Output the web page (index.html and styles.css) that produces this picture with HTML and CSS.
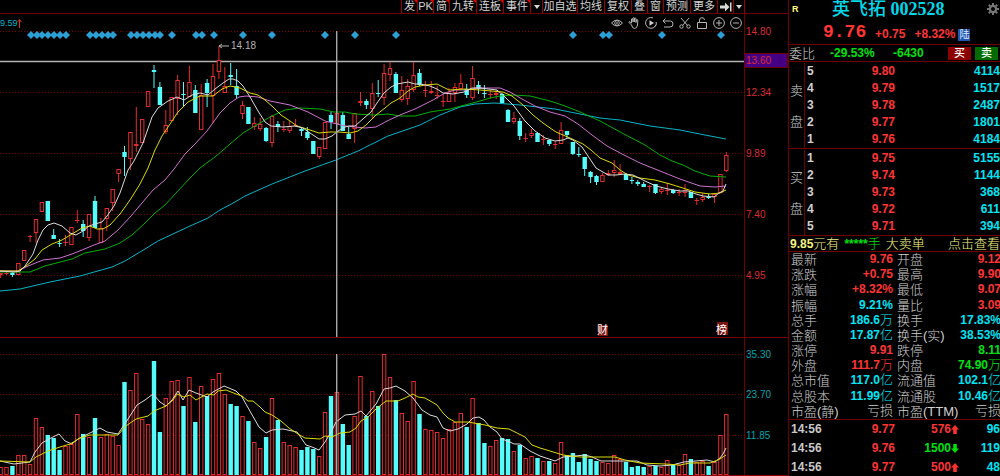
FILE: index.html
```html
<!DOCTYPE html>
<html lang="zh-CN">
<head>
<meta charset="utf-8">
<title>英飞拓 002528</title>
<link rel="stylesheet" href="styles.css">
</head>
<body>
<div class="terminal">
  <main class="main">
    <nav class="toolbar">
      <button class="tab tab-1 hot">发</button>
      <button class="tab tab-1 hot">PK</button>
      <button class="tab tab-1 hot">简</button>
      <button class="tab tab-2 hot">九转</button>
      <button class="tab tab-2 hot">连板</button>
      <button class="tab tab-2 hot">事件</button>
      <button class="tab tab-0" aria-label="展开"><span class="caret"></span></button>
      <button class="tab tab-3">加自选</button>
      <button class="tab tab-2">均线</button>
      <button class="tab tab-2">复权</button>
      <button class="tab tab-1">叠</button>
      <button class="tab tab-1">窗</button>
      <button class="tab tab-2">预测</button>
      <button class="tab tab-2">更多</button>
      <button class="tab tab-1" aria-label="隐藏"><svg width="12" height="10" viewBox="0 0 12 10"><path d="M0 3.500H5V0.500L9.500 5L5 9.500V6.500H0ZM10 0.500H11.500V9.500H10Z" fill="#d8d8d8"/></svg></button>
      <button class="tab tab-0" aria-label="菜单"><span class="caret"></span></button>
    </nav>
    <section class="chart">
      <div class="tools">
        <button class="tool" aria-label="显示"><svg viewBox="0 0 12 12"><path d="M.5 6Q6 0 11.500 6Q6 12 .5 6Z"/><circle cx="6" cy="6" r="2.300"/><circle cx="6" cy="6" r=".5"/></svg></button>
        <button class="tool" aria-label="拖动"><svg viewBox="0 0 12 12"><path d="M3.500 8L1 5.500Q.5 4.500 1.700 4.700L3.500 6V2Q4.300 1 5 2V5V1Q5.800 0 6.500 1V5V1.500Q7.300.7 8 1.500V5.500L8.300 3Q9.300 2 9.800 3L9.500 8Q9 11.500 6.500 11.500Q4.500 11.500 3.500 8Z"/></svg></button>
        <button class="tool" aria-label="播放"><svg viewBox="0 0 12 12"><path d="M8 .9A5.400 5.400 0 1 0 11.300 5M9.500 10L11.400 7.500"/><path d="M4.500 3.200L9 6L4.500 8.800Z" class="solid"/></svg></button>
        <button class="tool" aria-label="撤销"><svg viewBox="0 0 12 12"><path d="M3.500 1.500L1 4L3.500 6.500M1 4H8.500Q11 4.300 11 7Q11 10 8 10H2"/></svg></button>
        <button class="tool" aria-label="剪切"><svg viewBox="0 0 12 12"><path d="M2 1L8.500 8.500M10 1L3.500 8.500"/><circle cx="2.500" cy="9.500" r="1.700"/><circle cx="9.500" cy="9.500" r="1.700"/></svg></button>
        <button class="tool" aria-label="锁定"><svg viewBox="0 0 12 12"><path d="M1.500 5.500H10.500V11.500H1.500ZM3.500 5.500V3Q3.500.7 6 .7Q8.500.7 8.500 3"/></svg></button>
        <button class="tool" aria-label="放大"><svg viewBox="0 0 12 12"><circle cx="6" cy="6" r="5.400"/><path d="M3 6H9M6 3V9"/></svg></button>
        <button class="tool" aria-label="缩小"><svg viewBox="0 0 12 12"><circle cx="6" cy="6" r="5.400"/><path d="M3 6H9"/></svg></button>
      </div>
      <svg id="plot" class="plot" viewBox="0 14 788 462" preserveAspectRatio="xMinYMin meet"></svg>
    </section>
  </main>

  <aside class="side">
    <header class="head">
      <span class="flag">R</span>
      <h1 class="name">英飞拓 <span class="code">002528</span></h1>
      <button class="gear" aria-label="设置"><svg width="12" height="12" viewBox="0 0 12 12"><circle cx="6" cy="6" r="3.100" fill="none" stroke="#777" stroke-width="2.200"/><path d="M6 0V2M6 10V12M0 6H2M10 6H12M1.800 1.800L3.200 3.200M8.800 8.800L10.200 10.200M10.200 1.800L8.800 3.200M3.200 8.800L1.800 10.200" stroke="#777" stroke-width="2"/></svg></button>
    </header>
    <div class="quote">
      <span class="last">9.76</span><span>+0.75</span><span class="pct">+8.32%</span><span class="market">陆</span>
    </div>
    <div class="ratio">
      <span class="label">委比</span><span class="ratio-pct">-29.53%</span><span class="ratio-diff">-6430</span>
      <button class="trade buy">买</button><button class="trade sell">卖</button>
    </div>
    <table class="book">
      <tr><th class="book-side" rowspan="5"><span>卖</span><span>盘</span></th><td class="lv">5</td><td class="px">9.80</td><td class="qty">4114</td></tr>
      <tr><td class="lv">4</td><td class="px">9.79</td><td class="qty">1517</td></tr>
      <tr><td class="lv">3</td><td class="px">9.78</td><td class="qty">2487</td></tr>
      <tr><td class="lv">2</td><td class="px">9.77</td><td class="qty">1801</td></tr>
      <tr><td class="lv">1</td><td class="px">9.76</td><td class="qty">4184</td></tr>
    </table>
    <table class="book">
      <tr><th class="book-side" rowspan="5"><span>买</span><span>盘</span></th><td class="lv">1</td><td class="px">9.75</td><td class="qty">5155</td></tr>
      <tr><td class="lv">2</td><td class="px">9.74</td><td class="qty">1144</td></tr>
      <tr><td class="lv">3</td><td class="px">9.73</td><td class="qty">368</td></tr>
      <tr><td class="lv">4</td><td class="px">9.72</td><td class="qty">611</td></tr>
      <tr><td class="lv">5</td><td class="px">9.71</td><td class="qty">394</td></tr>
    </table>
    <div class="alert">
      <span><b>9.85</b>元有</span><span class="down"><b>*****</b>手</span><span>大卖单</span><a class="more" href="#detail">点击查看</a>
    </div>
    <table class="stats">
      <tr><th>最新</th><td class="up">9.76</td><th>开盘</th><td class="up">9.12</td></tr>
      <tr><th>涨跌</th><td class="up">+0.75</td><th>最高</th><td class="up">9.90</td></tr>
      <tr><th>涨幅</th><td class="up">+8.32%</td><th>最低</th><td class="up">9.07</td></tr>
      <tr><th>振幅</th><td>9.21%</td><th>量比</th><td class="up">3.09</td></tr>
      <tr><th>总手</th><td>186.6<i>万</i></td><th>换手</th><td>17.83%</td></tr>
      <tr><th>金额</th><td>17.87<i>亿</i></td><th>换手(实)</th><td>38.53%</td></tr>
      <tr><th>涨停</th><td class="up">9.91</td><th>跌停</th><td class="down">8.11</td></tr>
      <tr><th>外盘</th><td class="up">111.7<i>万</i></td><th>内盘</th><td class="down">74.90<i>万</i></td></tr>
      <tr><th>总市值</th><td>117.0<i>亿</i></td><th>流通值</th><td>102.1<i>亿</i></td></tr>
      <tr><th>总股本</th><td>11.99<i>亿</i></td><th>流通股</th><td>10.46<i>亿</i></td></tr>
      <tr><th>市盈(静)</th><td class="flat"><i>亏损</i></td><th>市盈(TTM)</th><td class="flat"><i>亏损</i></td></tr>
    </table>
    <table class="ticks">
      <tr><td class="time">14:56</td><td class="up">9.77</td><td class="up">576</td><td class="dir"><svg width="8" height="9" viewBox="0 0 8 9"><path d="M4 0L8 4.500H5.800V9H2.200V4.500H0Z" fill="#ff3030"/></svg></td><td>96</td></tr>
      <tr><td class="time">14:56</td><td class="up">9.76</td><td class="down">1500</td><td class="dir"><svg width="8" height="9" viewBox="0 0 8 9"><path d="M4 9L8 4.500H5.800V0H2.200V4.500H0Z" fill="#00e000"/></svg></td><td>119</td></tr>
      <tr><td class="time">14:56</td><td class="up">9.77</td><td class="up">500</td><td class="dir"><svg width="8" height="9" viewBox="0 0 8 9"><path d="M4 0L8 4.500H5.800V9H2.200V4.500H0Z" fill="#ff3030"/></svg></td><td>48</td></tr>
    </table>
  </aside>
</div>
<script src="chart.js"></script>
</body>
</html>
```

FILE: styles.css
```css
* { box-sizing: border-box; }
body {
  margin: 0;
  background: #000;
  color: #d0d0d0;
  font: 13px/15px "Liberation Sans", "Noto Sans CJK SC", sans-serif;
  overflow: hidden;
}
button {
  margin: 0;
  padding: 0;
  border: 0;
  background: none;
  color: inherit;
  font: inherit;
}
table { border-collapse: separate; border-spacing: 0; table-layout: fixed; width: 100%; }
th, td { padding: 0; font-weight: 400; text-align: right; white-space: nowrap; }
i { font-style: normal; font-weight: 300; }
b { font-weight: 700; }
.up { color: #ff3434; }
.down { color: #00e010; }

.terminal { display: grid; grid-template-columns: minmax(0, 1fr) 212px; height: 100vh; min-height: 476px; overflow: hidden; }
.main { display: flex; flex-direction: column; }

/* toolbar */
.toolbar {
  display: flex;
  justify-content: flex-end;
  height: 14px;
  padding-right: 43px;
  border-bottom: 1px solid #6a0000;
}
.tab {
  position: relative;
  height: 13px;
  border-left: 1px solid #900;
  color: #d4d4d4;
  font-size: 11px;
  line-height: 13px;
  text-align: center;
  white-space: nowrap;
}
.tab:last-child { border-right: 1px solid #900; }
.tab svg { display: block; margin: 0 auto; }
.tab-0 { width: 12px; }
.tab-1 { width: 16px; }
.tab-2 { width: 27px; }
.tab-3 { width: 35px; }
.hot::after {
  content: "";
  position: absolute;
  top: 0;
  right: 0;
  border-top: 3px solid #e00;
  border-left: 3px solid transparent;
}
.caret { display: inline-block; border: 3px solid transparent; border-top: 4px solid #d8d8d8; border-bottom: 0; vertical-align: middle; }

/* chart */
.chart { position: relative; }
.plot { display: block; width: 100%; }
.plot text { font: 10px "Liberation Sans", "Noto Sans CJK SC", sans-serif; }
.plot .small { font-size: 9px; }
.plot .mark { font-size: 11px; }
.tools { position: absolute; top: 3px; right: 46px; display: flex; gap: 5px; }
.tool { width: 12px; height: 12px; }
.tool svg { display: block; width: 12px; height: 12px; fill: none; stroke: #b4b4b4; stroke-width: 1; }
.tool .solid { fill: #d0d0d0; stroke: none; }

/* side panel */
.side { border-left: 1px solid #700000; overflow: hidden; }
.head { display: flex; align-items: center; height: 18px; padding: 0 1px 0 3px; }
.flag { width: 40px; color: #ffff80; font-size: 9px; font-weight: 700; }
.name { flex: 1; margin: 0; color: #00d8e8; font: 500 18px/18px "Liberation Serif", "Noto Sans CJK SC", serif; white-space: nowrap; }
.code { font-weight: 700; }
.gear svg { display: block; }
.quote {
  display: flex;
  align-items: flex-end;
  height: 27px;
  padding: 0 0 2px 34px;
  border-bottom: 1px solid #700000;
  color: #ff3434;
  font-size: 12px;
  font-weight: 700;
}
.last { width: 52px; font: 700 18px/20px "Liberation Mono", monospace; }
.pct { margin-left: 9px; }
.market { width: 12px; margin: 0 0 1px 3px; background: #2454a8; color: #dce8ff; font-size: 10px; font-weight: 400; line-height: 12px; text-align: center; }
.ratio {
  display: flex;
  align-items: center;
  height: 17px;
  padding-right: 2px;
  border-bottom: 1px solid #700000;
  color: #00e010;
  font-size: 12px;
  font-weight: 700;
}
.label { width: 41px; color: #d0d0d0; font-size: 13px; font-weight: 300; }
.ratio-pct { width: 63px; }
.ratio-diff { flex: 1; }
.trade { width: 23px; height: 13px; margin-left: 4px; color: #fff; font-size: 11px; font-weight: 500; line-height: 12px; }
.buy { background: #8c0000; }
.sell { background: #006c00; }

.book { padding-top: 1px; border-bottom: 1px solid #700000; font-size: 12px; line-height: 17px; }
.book td { font-weight: 700; }
.book-side { width: 16px; border-right: 1px solid #700000; font-size: 13px; font-weight: 300; line-height: 31px; text-align: center; }
.book-side span { display: block; }
.book .lv { width: 16px; padding-left: 2px; text-align: left; }
.book .px { width: 74px; color: #ff3434; }
.book .qty { color: #00e4f4; }

.alert {
  display: flex;
  gap: 5px;
  height: 16px;
  padding-left: 1px;
  border-bottom: 1px solid #700000;
  color: #f4f480;
  font-weight: 300;
  white-space: nowrap;
}
.alert b { font-size: 12px; }
.more { margin-left: auto; color: inherit; text-decoration: none; }

.stats { height: 167px; }
.stats th { width: 50px; padding-left: 2px; font-weight: 300; text-align: left; }
.stats th + td { width: 54px; }
.stats td + th { width: 54px; padding-left: 4px; }
.stats td { font-size: 12px; font-weight: 700; }
.stats td:not([class]) { color: #00e4f4; }
.stats i { font-size: 13px; line-height: 1; }

.ticks { border-top: 1px solid #700000; font-size: 12px; line-height: 19px; }
.ticks td { color: #00e4f4; font-weight: 700; }
.ticks td.time { width: 46px; padding: 0 0 0 2px; color: #c8c8c8; text-align: left; }
.ticks td.up { width: 60px; color: #ff3434; }
.ticks td.down { color: #00e010; }
.ticks td:nth-child(3) { width: 56px; }
.ticks td.dir { width: 9px; }
.ticks svg { display: block; }
```

FILE: chart.js
```js
const plot = document.getElementById("plot");
const STEP = 5.9, FIRST = 0.6;
const RED = "#e42c2c", CYAN = "#54fcfc";

function el(name, attrs, text) {
  const node = document.createElementNS("http://www.w3.org/2000/svg", name);
  for (const key in attrs) node.setAttribute(key, attrs[key]);
  if (text) node.textContent = text;
  plot.appendChild(node);
}
function line(x1, y1, x2, y2, stroke, extra) {
  el("line", Object.assign({ x1, y1, x2, y2, stroke }, extra));
}
function bar(x, top, bottom, rising) {
  if (rising && bottom - top > 2) {
    el("rect", { x: x - 1.7, y: top + 0.5, width: 3.4, height: bottom - top - 1, fill: "#000", stroke: RED });
  } else {
    el("rect", { x: x - 2.2, y: top, width: 4.4, height: Math.max(1, bottom - top), fill: rising ? RED : CYAN });
  }
}

// direction, body top, body bottom, wick top, wick bottom
const candles = `r273,275,273,278 r273,274,272,275 c273,275,272,277 r263,275,263,275 r250,261,250,261 r236,237,235,242 r219,233,219,243 r202,212,202,212
c201,221,201,221 c235,239,229,239 c243,244,239,247 r242,243,235,246 r227,245,227,245 r220,221,210,223 c224,231,220,237 r214,238,214,241
c201,228,196,228 r228,243,218,243 r208,219,208,231 r189,203,189,211 r169,174,169,182 c152,157,146,176 r132,159,132,170 r144,146,107,152
r119,143,119,143 r91,107,91,107 c70,72,65,88 c87,105,82,105 r125,132,110,134 r97,121,97,121 r80,99,75,115 c94,95,82,107
r82,97,66,97 c90,113,85,113 r95,130,84,130 c83,93,79,107 r76,96,64,123 r60,72,46,79 r86,93,67,93 c75,77,63,85
c86,95,69,99 r105,114,101,119 c107,124,107,124 r123,127,117,130 r124,129,118,131 c128,141,127,142 r116,143,115,147 c124,127,121,132
r129,130,121,132 r126,131,121,133 r125,126,119,127 c129,131,127,136 c132,138,127,140 c141,154,141,154 r147,157,147,159 r122,149,122,149
c115,122,112,129 r113,124,100,124 c115,131,112,131 c134,139,127,139 r113,129,113,143 r101,103,92,106 c101,105,99,109 r93,109,83,118
c93,94,80,97 r73,98,64,105 r68,75,62,81 c74,93,72,93 r90,100,76,102 r86,99,79,105 r75,90,62,92 c73,85,69,86
r90,91,81,97 r91,93,81,94 r95,96,86,99 r101,102,94,107 r93,102,88,102 r87,93,83,102 r83,89,74,89 c89,95,84,98
r78,98,66,100 c85,89,81,94 c93,94,85,98 r94,95,90,99 r93,95,90,99 c94,103,93,103 c110,122,109,122 r118,122,112,124
c121,136,118,140 r138,139,133,142 r133,136,129,138 c133,142,132,142 r139,140,135,145 c140,144,140,146 r144,145,141,149 r130,144,122,144
c131,135,131,138 c142,154,142,155 c154,155,147,157 c157,169,157,176 c172,177,171,183 c176,182,175,185 r175,182,173,182 r173,175,170,176
r170,173,160,177 r172,174,164,174 c174,180,173,180 c180,181,177,184 c182,184,180,186 c184,187,182,187 r186,187,185,192 c184,193,184,194
r189,192,187,194 r190,191,183,195 c190,193,189,194 r192,193,189,196 r190,193,184,197 c192,198,192,198 r200,201,198,205 r197,200,193,202
c197,198,194,199 r194,197,194,203 r174,193,174,193 r155,171,152,172`.split(/\s+/);

// top of each volume bar
const volumes = [467,467,466,455,455,464,418,427,435,438,450,446,444,414,434,437,418,437,434,436,445,382,390,373,419,424,361,432,398,381,380,406,
377,422,386,396,379,373,394,404,406,416,421,442,448,437,398,420,442,445,447,450,447,449,456,412,396,392,424,445,416,376,416,391,
406,354,377,400,413,421,381,414,429,430,432,438,429,422,413,427,398,423,443,446,440,438,439,451,445,458,456,458,461,461,463,442,
455,453,462,454,459,461,462,463,455,459,462,467,466,467,466,466,467,460,465,465,454,459,462,461,466,462,435,414];
const volumeCyan = new Set([2,8,9,10,14,16,21,26,27,31,33,35,39,40,42,45,47,51,52,53,56,58,59,62,64,67,71,79,81,82,85,86,88,91,93,96,97,98,99,100,101,106,107,108,109,111,114,117,120]);

const averages = [
  ["#00b4c8", "0,291 20,289 50,282 80,276 112,267 125,261 145,249 158,241 175,233 190,226 208,218 220,210 235,202 245,196 272,184 305,171 336,160 358,151 388,136 420,125 440,115 460,107 475,104 495,103 520,105 555,109 575,113 600,118 620,120 650,126 680,130 705,135 726,139"],
  ["#00b000", "0,272 30,272 45,266 60,262 72,259 85,253 105,249 120,243 132,235 145,223 155,213 165,205 177,192 190,178 200,168 215,157 230,144 243,133 258,124 272,116 285,110 300,108 320,109 334,112 345,112 355,114 375,115 388,114 400,116 415,116 430,112 450,109 465,105 480,101 490,98 500,96 512,95 530,96 550,101 565,106 580,112 600,121 622,133 645,145 660,155 672,161 683,165 695,171 710,176 726,177"],
  ["#d070d0", "0,271 18,271 28,266 43,260 60,258 72,254 82,250 94,245 105,241 118,230 131,216 142,203 153,190 165,180 174,169 185,154 195,144 207,131 220,113 230,103 239,97 246,96 258,97 270,101 290,105 308,112 325,121 345,126 365,128 376,127 387,121 400,115 415,109 433,100 445,93 455,90 467,90 477,88 500,88 510,92 522,99 535,106 550,112 565,116 578,124 592,135 607,146 622,154 640,163 660,171 680,179 700,186 715,187 726,186"],
  ["#dcdc00", "0,271 18,271 26,266 35,259 42,250 52,244 62,240 72,234 82,228 90,226 97,229 103,229 110,225 120,214 130,200 140,184 148,168 155,150 162,136 170,124 178,112 188,102 200,96 213,96 222,89 230,86 240,88 250,93 258,95 265,100 273,107 281,115 290,121 297,126 310,130 319,133 330,132 339,132 350,133 358,131 366,125 376,115 385,108 391,103 400,98 408,91 415,87 425,85 437,84 449,90 465,89 480,90 503,92 512,96 523,105 533,115 543,123 556,132 570,138 583,144 591,150 600,158 612,163 620,170 628,175 640,178 655,180 670,184 686,189 695,192 710,194 720,193 726,190"],
  ["#dcdcdc", "0,271 14,272 20,271 25,266 33,254 38,240 43,230 48,225 54,223 62,226 70,233 76,235 83,231 89,226 95,224 102,222 107,216 114,206 120,193 128,170 134,161 143,143 152,117 158,108 168,101 177,97 184,100 192,95 200,93 208,95 215,89 223,83 229,79 233,79 238,81 243,86 250,97 258,111 265,122 271,126 283,127 295,126 303,128 310,133 319,139 325,139 332,136 338,131 345,127 349,126 355,126 364,118 371,112 377,103 384,93 391,87 397,84 408,82 415,84 420,84 430,86 437,89 443,93 453,94 464,92 472,88 480,88 497,90 505,97 514,106 525,121 535,131 545,138 555,141 563,140 568,138 573,140 582,147 588,156 596,168 608,175 616,175 625,174 633,175 645,181 656,186 668,189 680,191 688,191 696,194 703,196 714,197 719,193 723,191 726,184"],
  ["#dcdcdc", "0,461 14,464 30,462 35,452 42,443 49,439 59,434 65,441 72,444 78,439 86,435 94,431 100,428 107,432 118,434 128,419 137,405 145,400 153,394 160,402 166,406 172,400 178,391 183,400 189,390 196,393 207,397 213,392 224,386 236,391 242,397 251,413 259,427 266,433 272,430 283,429 297,432 306,445 312,447 319,450 325,442 331,432 336,422 345,415 355,414 361,411 366,416 376,404 384,389 390,388 396,386 405,391 413,398 422,410 430,415 437,417 443,428 450,431 458,429 467,424 473,418 479,417 484,420 490,427 497,432 502,439 510,442 514,444 520,444 530,451 540,456 555,461 563,457 575,456 585,455 592,457 601,461 637,461 647,465 660,466 672,465 684,462 707,460 715,462 720,458 723,454 726,448"],
  ["#dcdc00", "0,461 30,462 36,457 48,451 60,447 70,444 80,438 90,435 118,435 126,426 136,419 148,416 154,411 166,406 173,400 177,394 184,397 190,395 196,400 207,394 214,395 218,391 226,390 236,394 242,396 248,401 253,401 260,407 265,412 272,415 281,421 289,428 298,434 305,438 320,439 325,436 332,437 340,433 350,432 356,428 361,421 368,417 376,409 386,401 398,401 405,398 413,394 418,397 425,398 432,402 437,405 443,413 448,418 455,422 468,422 485,425 497,428 509,429 515,432 525,437 532,445 540,448 550,451 563,455 580,457 615,457 625,460 640,463 665,464 680,465 690,463 710,463 720,459 726,455"]
];

// grid and frame
for (const y of [31.5, 92.5, 153.5, 214.5, 275.5, 354.5, 394.5, 435.5]) {
  line(0, y, 744, y, "#780000", { "stroke-dasharray": "1 2" });
}
line(744.5, 14, 744.5, 476, "#700000");
line(0, 337.5, 788, 337.5, "#780000");
line(0, 475.5, 788, 475.5, "#900000");

// crosshair
line(0, 61.5, 744, 61.5, "#b4b4b4", { "stroke-width": 1.400 });

candles.forEach((item, i) => {
  const rising = item[0] === "r";
  const [top, bottom, high, low] = item.slice(1).split(",").map(Number);
  const x = FIRST + STEP * i;
  line(x, high, x, low, rising ? RED : CYAN);
  bar(x, top, bottom, rising);
});
volumes.forEach((top, i) => bar(FIRST + STEP * i, top, 475, !volumeCyan.has(i)));
for (const [stroke, points] of averages) el("polyline", { points, stroke, fill: "none" });

line(336.700, 31, 336.700, 337, "#a8a8a8", { "stroke-width": 1.400 });
line(336.700, 354, 336.700, 475, "#a8a8a8", { "stroke-width": 1.400 });

// event diamonds
for (const x of [31,37,42,48,54,60,66,90,96,102,108,113,131,137,143,149,155,160,172,196,202,214,243,272,325,355,396,573,603,609,662,721]) {
  el("path", { d: `M${x} 31L${x + 4} 35L${x} 39L${x - 4} 35Z`, fill: "#2ca0d4" });
}

// peak label
el("path", { d: "M219 46H229M222 44L219 46L222 48", stroke: "#b4b4b4", fill: "none" });
el("text", { x: 231, y: 49, fill: "#b4b4b4" }, "14.18");
el("text", { x: 0, y: 26, fill: "#00b4c8", class: "small" }, "9.59");
el("path", { d: "M19.500 28V20M17.500 22L19.500 19.500L21.500 22", stroke: RED, fill: "none" });

// axis labels
el("rect", { x: 744.5, y: 53.5, width: 43, height: 14, fill: "#440084", stroke: "#700000" });
for (const [y, text] of [[35, "14.80"], [64, "13.60"], [96, "12.34"], [157, "9.89"], [218, "7.40"], [279, "4.95"]]) {
  el("text", { x: 746, y, fill: "#dc2c34" }, text);
}
for (const [y, text] of [[358, "35.30"], [398, "23.70"], [439, "11.85"]]) {
  el("text", { x: 746, y, fill: "#00a4ac" }, text);
}

// event marks
el("rect", { x: 598, y: 325, width: 10, height: 11, fill: "#7c1414" });
el("text", { x: 597, y: 334, fill: "#fff", class: "mark" }, "财");
el("rect", { x: 717, y: 322, width: 11, height: 13, fill: "#7c1414" });
el("text", { x: 716, y: 334, fill: "#fff", class: "mark" }, "榜");
```
